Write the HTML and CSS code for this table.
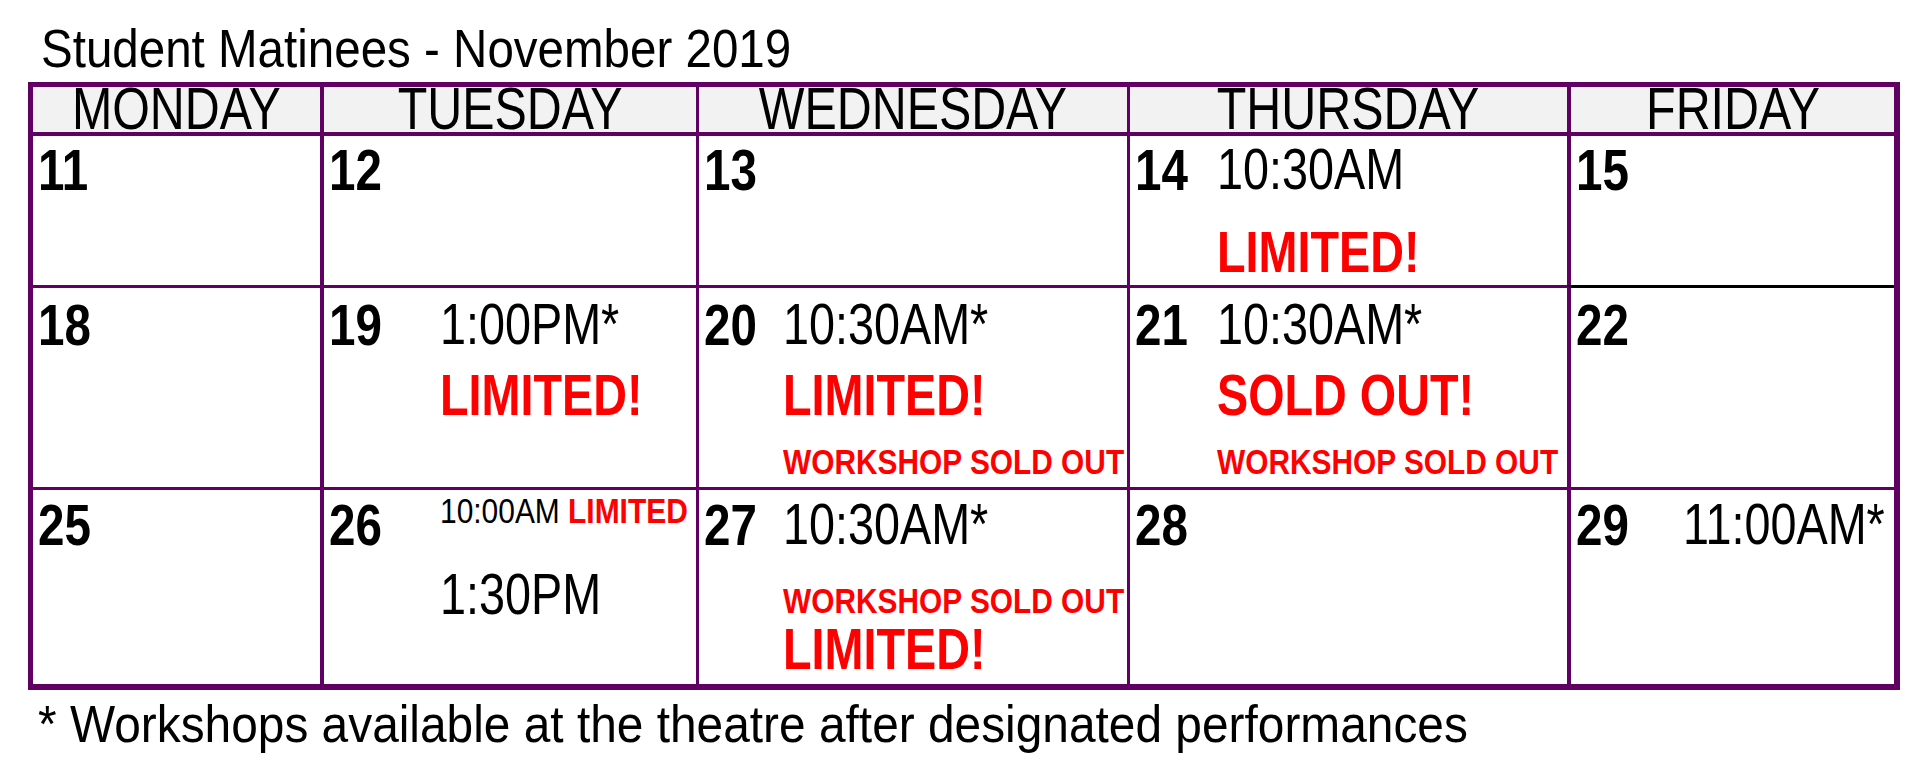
FILE: index.html
```html
<!DOCTYPE html>
<html lang="en">
<head>
<meta charset="utf-8">
<title>Student Matinees - November 2019</title>
<link rel="stylesheet" href="styles.css">
</head>
<body>
<div class="page">
  <h1 class="title">Student Matinees - November 2019</h1>
  <div class="cal">
    <div class="hd c1"><span class="hd-text">MONDAY</span></div>
    <div class="hd c2"><span class="hd-text">TUESDAY</span></div>
    <div class="hd c3"><span class="hd-text">WEDNESDAY</span></div>
    <div class="hd c4"><span class="hd-text">THURSDAY</span></div>
    <div class="hd c5"><span class="hd-text">FRIDAY</span></div>

    <div class="cell r1 c1"><div class="date">11</div></div>
    <div class="cell r1 c2"><div class="date">12</div></div>
    <div class="cell r1 c3"><div class="date">13</div></div>
    <div class="cell r1 c4"><div class="date">14</div>
      <div class="events">
        <div class="time">10:30AM</div>
        <div class="status">LIMITED!</div>
      </div>
    </div>
    <div class="cell r1 c5"><div class="date">15</div></div>

    <div class="cell r2 c1"><div class="date">18</div></div>
    <div class="cell r2 c2"><div class="date">19</div>
      <div class="events">
        <div class="time">1:00PM*</div>
        <div class="status">LIMITED!</div>
      </div>
    </div>
    <div class="cell r2 c3"><div class="date">20</div>
      <div class="events">
        <div class="time">10:30AM*</div>
        <div class="status">LIMITED!</div>
        <div class="ws">WORKSHOP SOLD OUT</div>
      </div>
    </div>
    <div class="cell r2 c4"><div class="date">21</div>
      <div class="events">
        <div class="time">10:30AM*</div>
        <div class="status">SOLD OUT!</div>
        <div class="ws">WORKSHOP SOLD OUT</div>
      </div>
    </div>
    <div class="cell r2 c5 black-top"><div class="date">22</div></div>

    <div class="cell r3 c1"><div class="date">25</div></div>
    <div class="cell r3 c2"><div class="date">26</div>
      <div class="events">
        <div class="small">10:00AM <span class="red-bold">LIMITED</span></div>
        <div class="time later">1:30PM</div>
      </div>
    </div>
    <div class="cell r3 c3"><div class="date">27</div>
      <div class="events">
        <div class="time">10:30AM*</div>
        <div class="ws">WORKSHOP SOLD OUT</div>
        <div class="status">LIMITED!</div>
      </div>
    </div>
    <div class="cell r3 c4"><div class="date">28</div></div>
    <div class="cell r3 c5"><div class="date">29</div>
      <div class="events">
        <div class="time">11:00AM*</div>
      </div>
    </div>
  </div>
  <p class="note">* Workshops available at the theatre after designated performances</p>
</div>
</body>
</html>
```

FILE: styles.css
```css
* {
  box-sizing: border-box;
}

html, body {
  margin: 0;
  padding: 0;
  background: #ffffff;
}

body {
  font-family: "Liberation Sans Narrow", "Arial Narrow", "Liberation Sans", Arial, sans-serif;
  color: #000000;
}

.page {
  width: 1920px;
  height: 768px;
  overflow: hidden;
}

/* Arial Narrow look: compress Liberation Sans horizontally */
.title,
.hd-text,
.date,
.time,
.status,
.ws,
.small,
.note {
  transform: scaleX(0.82);
  transform-origin: 0 50%;
}

.title {
  margin: 0 0 7px 41px;
  padding: 21px 0 0 0;
  font-size: 54px;
  line-height: 54px;
  font-weight: normal;
  white-space: nowrap;
  transform: scaleX(0.88);
}

.cal {
  display: grid;
  grid-template-columns: 287px 376px 431px 440px 327px;
  grid-template-rows: 45px 153px 202px 197px;
  width: 1872px;
  margin-left: 28px;
  border-style: solid;
  border-color: #5f0062;
  border-width: 5px 6px 6px 5px;
}

.hd {
  display: flex;
  justify-content: center;
  background: #f2f2f2;
  font-size: 59px;
  line-height: 45px;
  white-space: nowrap;
  overflow: visible;
}

.hd-text {
  display: inline-block;
  transform-origin: 50% 50%;
}

.c2, .c3, .c4, .c5 {
  border-left-style: solid;
  border-left-color: #5f0062;
}
.c2 { border-left-width: 4px; }
.c3 { border-left-width: 3px; }
.c4 { border-left-width: 3px; }
.c5 { border-left-width: 4px; }

.cell {
  display: flex;
  align-items: flex-start;
  padding-left: 5px;
  border-top-style: solid;
  border-top-color: #5f0062;
  background: #ffffff;
}
.r1 { border-top-width: 4px; padding-top: 5px; }
.r2 { border-top-width: 3px; padding-top: 8px; }
.r3 { border-top-width: 3px; padding-top: 6px; }

.cell.black-top {
  border-top-color: #000000;
}

.date {
  font-size: 58px;
  line-height: 58px;
  font-weight: bold;
  white-space: nowrap;
  flex: none;
}
.c1 .date { width: 80px; }
.c2 .date { width: 111px; }
.c3 .date { width: 79px; }
.c4 .date { width: 82px; }
.c5 .date { width: 107px; }

.events {
  display: flex;
  flex-direction: column;
  align-items: flex-start;
  white-space: nowrap;
}

.time {
  font-size: 57px;
  line-height: 57px;
}

.status {
  font-size: 57px;
  line-height: 57px;
  font-weight: bold;
  color: #ff0000;
}
.r1 .status { margin-top: 26px; }
.r2 .status { margin-top: 14px; }
.r3 .status { margin-top: 3px; }

.ws {
  font-size: 35px;
  line-height: 35px;
  font-weight: bold;
  color: #ff0000;
  transform: scaleX(0.853);
}
.r2 .ws { margin-top: 20px; }
.r3 .ws { margin-top: 30px; }

.small {
  font-size: 35px;
  line-height: 35px;
  margin-top: -3px;
  transform: scaleX(0.855);
}

.red-bold {
  color: #ff0000;
  font-weight: bold;
}

.time.later {
  margin-top: 38px;
}

.note {
  margin: 8px 0 0 38px;
  font-size: 52px;
  line-height: 52px;
  white-space: nowrap;
  transform: scaleX(0.92);
}
```
